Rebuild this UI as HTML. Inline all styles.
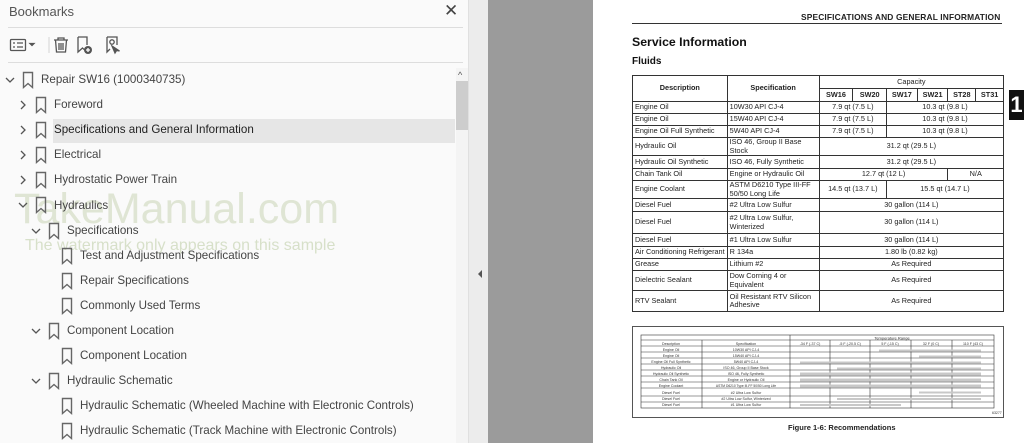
<!DOCTYPE html>
<html><head><meta charset="utf-8">
<style>
*{margin:0;padding:0;box-sizing:border-box}
body{width:1024px;height:443px;overflow:hidden;position:relative;background:#fafafa;font-family:"Liberation Sans",sans-serif}
.lp{position:absolute;left:0;top:0;width:468px;height:443px;background:#fafafa}
.ttl{position:absolute;left:9px;top:4px;font-size:13px;color:#555}
.x{position:absolute;left:444px;top:1px;font-size:17px;color:#444}
.hr{position:absolute;left:8px;width:455px;height:1px;background:#ddd}
.row{position:absolute;height:25px;line-height:25px;font-size:11.6px;color:#444;white-space:nowrap}
.row svg{vertical-align:middle;margin-right:4px}
.sel{position:absolute;left:53px;top:119px;width:402px;height:24px;background:#e6e6e6}
.wm1{position:absolute;left:14px;top:185px;font-size:43px;color:rgba(200,212,180,.55);white-space:nowrap}
.wm2{position:absolute;left:25px;top:237px;font-size:16px;color:rgba(200,212,180,.7);white-space:nowrap}
.page{position:absolute;left:593px;top:0;width:431px;height:443px;background:#fff}
table.t{position:absolute;left:632px;top:75px;width:372px;border-collapse:collapse;font-size:7.3px;color:#222}
table.t td{border:1px solid #333;padding:0 2px;line-height:8.5px}
table.t td.c{text-align:center}
</style></head><body>
<div class="lp">
<div class="ttl">Bookmarks</div>
<div class="x">✕</div>
<div class="hr" style="top:27px"></div>
<svg style="position:absolute;left:8px;top:34px" width="120" height="22" viewBox="0 0 120 22" fill="none" stroke="#555" stroke-width="1.3">
<rect x="2.5" y="5.5" width="15" height="11" rx="1"/><path d="M5 9h2M9 9h6M5 13h2M9 13h6"/>
<path d="M22 9.5l2 2 2-2z" fill="#555"/>
<path d="M41 3v16" stroke="#ddd"/>
<path d="M46 6h14M50 6V4h6v2M47.5 6l1 12h9l1-12M51 9v7M53 9v7M55 9v7"/>
<path d="M70 3h9v8M70 3v15l4.5-4 2 1.8"/><circle cx="80" cy="16" r="4" fill="#555" stroke="none"/><path d="M80 14v4M78 16h4" stroke="#fff"/>
<path d="M99 3h10v8M99 3v15l3-3"/><circle cx="104" cy="8" r="2.2"/><path d="M104 12l3 7 1.5-2.5 3 .5z" fill="#555"/>
</svg>
<div class="hr" style="top:62px"></div>
<div class="sel"></div>
<div class="wm1">TakeManual.com</div>
<div class="wm2">The watermark only appears on this sample</div>
</div>
<div style="position:absolute;left:456px;top:68px;width:12px;height:375px;background:#f4f4f4"></div>
<div style="position:absolute;left:456px;top:81px;width:12px;height:49px;background:#cdcdcd"></div>
<div style="position:absolute;left:458px;top:70px;font-size:9px;color:#555">^</div>
<div style="position:absolute;left:468px;top:0;width:20px;height:443px;background:#ececec;border-left:1px solid #e0e0e0"></div>
<div style="position:absolute;left:478px;top:270px;width:0;height:0;border-top:4px solid transparent;border-bottom:4px solid transparent;border-right:4px solid #555"></div>
<div style="position:absolute;left:488px;top:0;width:105px;height:443px;background:#9b9b9b"></div>

<div id="rows"></div>
<script>
var R=[[0,'v','Repair SW16 (1000340735)'],[1,'>','Foreword'],[1,'>','Specifications and General Information'],[1,'>','Electrical'],[1,'>','Hydrostatic Power Train'],[1,'v','Hydraulics'],[2,'v','Specifications'],[3,'','Test and Adjustment Specifications'],[3,'','Repair Specifications'],[3,'','Commonly Used Terms'],[2,'v','Component Location'],[3,'','Component Location'],[2,'v','Hydraulic Schematic'],[3,'','Hydraulic Schematic (Wheeled Machine with Electronic Controls)'],[3,'','Hydraulic Schematic (Track Machine with Electronic Controls)']];
var h='';
R.forEach(function(r,i){
 var y=67+i*25.1, x=1+r[0]*13;
 var ch='';
 if(r[1]=='v') ch='<path d="M5 9l4 4 4-4" stroke="#555" stroke-width="1.3" fill="none"/>';
 if(r[1]=='>') ch='<path d="M7 7l4 4-4 4" stroke="#555" stroke-width="1.3" fill="none"/>';
 h+='<div class="row" style="left:'+x+'px;top:'+y+'px;'+(i==2?'color:#222':'')+'"><svg width="36" height="22" viewBox="0 0 36 22">'+ch+'<path d="M22.5 3.5h9v15l-4.5-4-4.5 4z" stroke="#666" stroke-width="1.4" fill="none"/></svg>'+r[2]+'</div>';
});
document.getElementById('rows').innerHTML=h;
</script>

<div class="page">
<div style="position:absolute;left:208px;top:12px;font-size:8.4px;font-weight:bold;color:#222;letter-spacing:.15px">SPECIFICATIONS AND GENERAL INFORMATION</div>
<div style="position:absolute;left:39px;top:23px;width:370px;height:1px;background:#333"></div>
<div style="position:absolute;left:39px;top:35px;font-size:12.3px;font-weight:bold;color:#111">Service Information</div>
<div style="position:absolute;left:39px;top:56px;font-size:10px;font-weight:bold;color:#111">Fluids</div>
<div style="position:absolute;left:416px;top:90px;width:15px;height:30px;background:#111;color:#fff;font-weight:bold;font-size:22px;line-height:30px;text-align:center">1</div>
<div style="position:absolute;left:195px;top:423px;font-size:7.5px;font-weight:bold;color:#222">Figure 1-6: Recommendations</div>
</div>

<table class="t">
<tr style="height:13px"><td rowspan="2" class="c" style="width:93px;font-weight:bold">Description</td><td rowspan="2" class="c" style="width:92px;font-weight:bold">Specification</td><td colspan="6" class="c">Capacity</td></tr>
<tr style="height:13px;font-weight:bold"><td class="c">SW16</td><td class="c">SW20</td><td class="c">SW17</td><td class="c">SW21</td><td class="c">ST28</td><td class="c">ST31</td></tr>
<tr style="height:12px"><td>Engine Oil</td><td>10W30 API CJ-4</td><td colspan="2" class="c">7.9 qt (7.5 L)</td><td colspan="4" class="c">10.3 qt (9.8 L)</td></tr>
<tr style="height:12px"><td>Engine Oil</td><td>15W40 API CJ-4</td><td colspan="2" class="c">7.9 qt (7.5 L)</td><td colspan="4" class="c">10.3 qt (9.8 L)</td></tr>
<tr style="height:12px"><td>Engine Oil Full Synthetic</td><td>5W40 API CJ-4</td><td colspan="2" class="c">7.9 qt (7.5 L)</td><td colspan="4" class="c">10.3 qt (9.8 L)</td></tr>
<tr style="height:18px"><td>Hydraulic Oil</td><td>ISO 46, Group II Base Stock</td><td colspan="6" class="c">31.2 qt (29.5 L)</td></tr>
<tr style="height:13px"><td>Hydraulic Oil Synthetic</td><td>ISO 46, Fully Synthetic</td><td colspan="6" class="c">31.2 qt (29.5 L)</td></tr>
<tr style="height:12px"><td>Chain Tank Oil</td><td>Engine or Hydraulic Oil</td><td colspan="4" class="c">12.7 qt (12 L)</td><td colspan="2" class="c">N/A</td></tr>
<tr style="height:18px"><td>Engine Coolant</td><td>ASTM D6210 Type III-FF 50/50 Long Life</td><td colspan="2" class="c">14.5 qt (13.7 L)</td><td colspan="4" class="c">15.5 qt (14.7 L)</td></tr>
<tr style="height:13px"><td>Diesel Fuel</td><td>#2 Ultra Low Sulfur</td><td colspan="6" class="c">30 gallon (114 L)</td></tr>
<tr style="height:22px"><td>Diesel Fuel</td><td>#2 Ultra Low Sulfur, Winterized</td><td colspan="6" class="c">30 gallon (114 L)</td></tr>
<tr style="height:13px"><td>Diesel Fuel</td><td>#1 Ultra Low Sulfur</td><td colspan="6" class="c">30 gallon (114 L)</td></tr>
<tr style="height:12px"><td style="white-space:nowrap">Air Conditioning Refrigerant</td><td>R 134a</td><td colspan="6" class="c">1.80 lb (0.82 kg)</td></tr>
<tr style="height:12px"><td>Grease</td><td>Lithium #2</td><td colspan="6" class="c">As Required</td></tr>
<tr style="height:20px"><td>Dielectric Sealant</td><td>Dow Corning 4 or Equivalent</td><td colspan="6" class="c">As Required</td></tr>
<tr style="height:21px"><td>RTV Sealant</td><td>Oil Resistant RTV Silicon Adhesive</td><td colspan="6" class="c">As Required</td></tr>
</table>

<svg style="position:absolute;left:0;top:0" width="1024" height="443" viewBox="0 0 1024 443" font-family="Liberation Sans" font-size="3.6" fill="#333">
<rect x="632.5" y="326.5" width="371" height="91" fill="none" stroke="#555"/>
<g stroke="#333" stroke-width=".6" fill="none">
<rect x="641" y="335" width="353" height="73"/>
<path d="M641 340h353M641 346h353"/>
<path d="M702 340v68M790 335v73M830 340v68M870 340v68M911 340v68M952 340v68"/>
<path d="M641 352h353M641 358h353M641 364h353M641 370h353M641 376h353M641 382h353M641 388h353M641 396h353M641 402h353"/>
</g>
<g fill="#c8c8c8">
<rect x="879" y="349.5" width="102" height="2"/><rect x="919" y="355.5" width="62" height="2"/>
<rect x="800" y="361.5" width="181" height="2"/><rect x="837" y="367.5" width="144" height="2"/>
<rect x="800" y="372.5" width="181" height="3"/><rect x="800" y="378.5" width="181" height="3"/>
<rect x="800" y="384.5" width="181" height="3"/><rect x="919" y="391.5" width="62" height="2"/>
<rect x="837" y="398" width="144" height="2"/><rect x="800" y="404" width="101" height="2"/>
</g>
<text x="892" y="339.5" text-anchor="middle" font-size="4">Temperature Range</text>
<g text-anchor="middle">
<text x="671" y="345">Description</text><text x="746" y="345">Specification</text>
<text x="810" y="345">-34 F (-37 C)</text><text x="850" y="345">-5 F (-20.5 C)</text><text x="890" y="345">5 F (-15 C)</text><text x="931" y="345">32 F (0 C)</text><text x="973" y="345">110 F (43 C)</text>
<text x="671" y="351">Engine Oil</text><text x="746" y="351">10W30 API CJ-4</text>
<text x="671" y="357">Engine Oil</text><text x="746" y="357">15W40 API CJ-4</text>
<text x="671" y="363">Engine Oil Full Synthetic</text><text x="746" y="363">5W40 API CJ-4</text>
<text x="671" y="369">Hydraulic Oil</text><text x="746" y="369">ISO 46, Group II Base Stock</text>
<text x="671" y="375">Hydraulic Oil Synthetic</text><text x="746" y="375">ISO 46, Fully Synthetic</text>
<text x="671" y="381">Chain Tank Oil</text><text x="746" y="381">Engine or Hydraulic Oil</text>
<text x="671" y="387">Engine Coolant</text><text x="746" y="387" font-size="3.3">ASTM D6210 Type III-FF 50/50 Long Life</text>
<text x="671" y="394">Diesel Fuel</text><text x="746" y="394">#2 Ultra Low Sulfur</text>
<text x="671" y="400">Diesel Fuel</text><text x="746" y="400">#2 Ultra Low Sulfur, Winterized</text>
<text x="671" y="406">Diesel Fuel</text><text x="746" y="406">#1 Ultra Low Sulfur</text>
</g>
<text x="992" y="414" font-size="3.5">63277</text>
</svg>
</body></html>
